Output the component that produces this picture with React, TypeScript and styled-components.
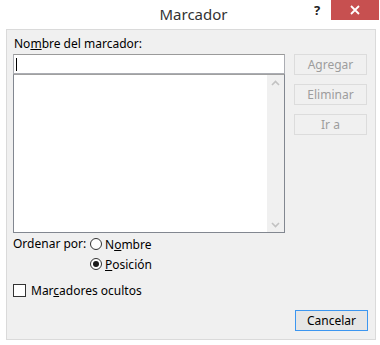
import React from 'react';
import styled, { createGlobalStyle } from 'styled-components';

const Global = createGlobalStyle`
  html, body { margin: 0; padding: 0; background: #ffffff; }
  body { font-family: "Noto Sans", "Open Sans", sans-serif; font-size: 12px; color: #000; }
`;

const Window = styled.div`
  width: 380px;
  height: 345px;
  background: #ffffff;
  display: flex;
  flex-direction: column;
  box-sizing: border-box;
`;

const TitleBar = styled.div`
  height: 29px;
  display: flex;
  align-items: flex-start;
  flex-shrink: 0;
`;

const Title = styled.div`
  flex: 1;
  text-align: center;
  padding-left: 84px;
  padding-top: 4px;
  font-size: 15px;
  color: #333333;
  line-height: 20px;
`;

const HelpButton = styled.div`
  width: 28px;
  height: 20px;
  display: flex;
  align-items: center;
  justify-content: center;
  font-weight: bold;
  font-size: 13px;
  color: #222;
`;

const CloseButton = styled.div`
  width: 48px;
  height: 20px;
  margin-right: 1px;
  background: #c75050;
  display: flex;
  align-items: center;
  justify-content: center;
`;

const Body = styled.div`
  flex: 1;
  margin: 0 4px 5px 6px;
  border: 1px solid #dadada;
  background: #f0f0f0;
  padding: 7px 7px 8px 6px;
  display: flex;
  flex-direction: column;
`;

const MainGrid = styled.div`
  display: grid;
  grid-template-columns: 272px 73px;
  column-gap: 9px;
`;

const Label = styled.div`
  grid-column: 1 / 3;
  height: 17px;
  line-height: 14px;
  padding-left: 1px;
`;

const LeftStack = styled.div`
  display: flex;
  flex-direction: column;
`;

const TextInput = styled.div`
  height: 20px;
  box-sizing: border-box;
  border: 1px solid #abadb3;
  border-top-color: #9a9a9a;
  background: #fff;
  padding: 3px 2px;
`;

const Caret = styled.div`
  width: 1px;
  height: 13px;
  background: #000;
`;

const ListBox = styled.div`
  height: 159px;
  box-sizing: border-box;
  border: 1px solid #828790;
  border-top: 1px solid #a0a0a0;
  background: #fff;
  display: flex;
  justify-content: flex-end;
`;

const ScrollBar = styled.div`
  width: 17px;
  background: #f0f0f0;
  display: flex;
  flex-direction: column;
  justify-content: space-between;
  align-items: center;
  padding: 5px 0 4px;
`;

const ButtonColumn = styled.div`
  display: flex;
  flex-direction: column;
  gap: 9px;
`;

const DialogButton = styled.div<{ $disabled?: boolean; $default?: boolean }>`
  height: 21px;
  box-sizing: border-box;
  border: 1px solid ${p => (p.$default ? '#3c96f0' : p.$disabled ? '#dcdcdc' : '#adadad')};
  background: ${p => (p.$disabled ? '#f0f0f0' : '#e6e6e6')};
  color: ${p => (p.$disabled ? '#9d9d9d' : '#000')};
  display: flex;
  align-items: center;
  justify-content: center;
  line-height: 14px;
`;

const SortRow = styled.div`
  display: flex;
  margin-top: 1px;
`;

const SortLabel = styled.div`
  width: 77px;
  line-height: 14px;
  padding-top: 3px;
`;

const RadioList = styled.div`
  display: flex;
  flex-direction: column;
`;

const RadioItem = styled.div`
  height: 20px;
  display: flex;
  align-items: center;
  gap: 3px;
`;

const RadioCircle = styled.div<{ $checked?: boolean }>`
  width: 12px;
  height: 12px;
  box-sizing: border-box;
  border-radius: 50%;
  border: 1px solid #333;
  background: #fff;
  display: flex;
  align-items: center;
  justify-content: center;
  &::after {
    content: '';
    width: 6px;
    height: 6px;
    border-radius: 50%;
    background: ${p => (p.$checked ? '#1a1a1a' : 'transparent')};
  }
`;

const CheckRow = styled.div`
  display: flex;
  align-items: center;
  gap: 5px;
  margin-top: 8px;
`;

const CheckBox = styled.div`
  width: 13px;
  height: 13px;
  box-sizing: border-box;
  border: 1px solid #333;
  background: #fff;
`;

const Footer = styled.div`
  margin-top: auto;
  display: flex;
  justify-content: flex-end;
`;

const FooterButton = styled(DialogButton)`
  width: 73px;
`;

const U = styled.span`
  text-decoration: underline;
`;

const Chevron = ({ up }: { up?: boolean }) => (
  <svg width="9" height="6" viewBox="0 0 9 6">
    <path
      d={up ? 'M1 5 L4.5 1.5 L8 5' : 'M1 1 L4.5 4.5 L8 1'}
      fill="none"
      stroke="#c2c2c2"
      strokeWidth="1.6"
    />
  </svg>
);

export default function App() {
  return (
    <Window>
      <Global />
      <TitleBar>
        <Title>Marcador</Title>
        <HelpButton>?</HelpButton>
        <CloseButton>
          <svg width="10" height="10" viewBox="0 0 10 10">
            <path d="M1 1 L9 9 M9 1 L1 9" stroke="#fff" strokeWidth="1.8" />
          </svg>
        </CloseButton>
      </TitleBar>
      <Body>
        <MainGrid>
          <Label>
            No<U>m</U>bre del marcador:
          </Label>
          <LeftStack>
            <TextInput>
              <Caret />
            </TextInput>
            <ListBox>
              <ScrollBar>
                <Chevron up />
                <Chevron />
              </ScrollBar>
            </ListBox>
          </LeftStack>
          <ButtonColumn>
            <DialogButton $disabled>Agregar</DialogButton>
            <DialogButton $disabled>Eliminar</DialogButton>
            <DialogButton $disabled>Ir a</DialogButton>
          </ButtonColumn>
        </MainGrid>
        <SortRow>
          <SortLabel>Ordenar por:</SortLabel>
          <RadioList>
            <RadioItem>
              <RadioCircle />
              <span>
                N<U>o</U>mbre
              </span>
            </RadioItem>
            <RadioItem>
              <RadioCircle $checked />
              <span>
                <U>P</U>osición
              </span>
            </RadioItem>
          </RadioList>
        </SortRow>
        <CheckRow>
          <CheckBox />
          <span>
            Mar<U>c</U>adores ocultos
          </span>
        </CheckRow>
        <Footer>
          <FooterButton $default>Cancelar</FooterButton>
        </Footer>
      </Body>
    </Window>
  );
}
